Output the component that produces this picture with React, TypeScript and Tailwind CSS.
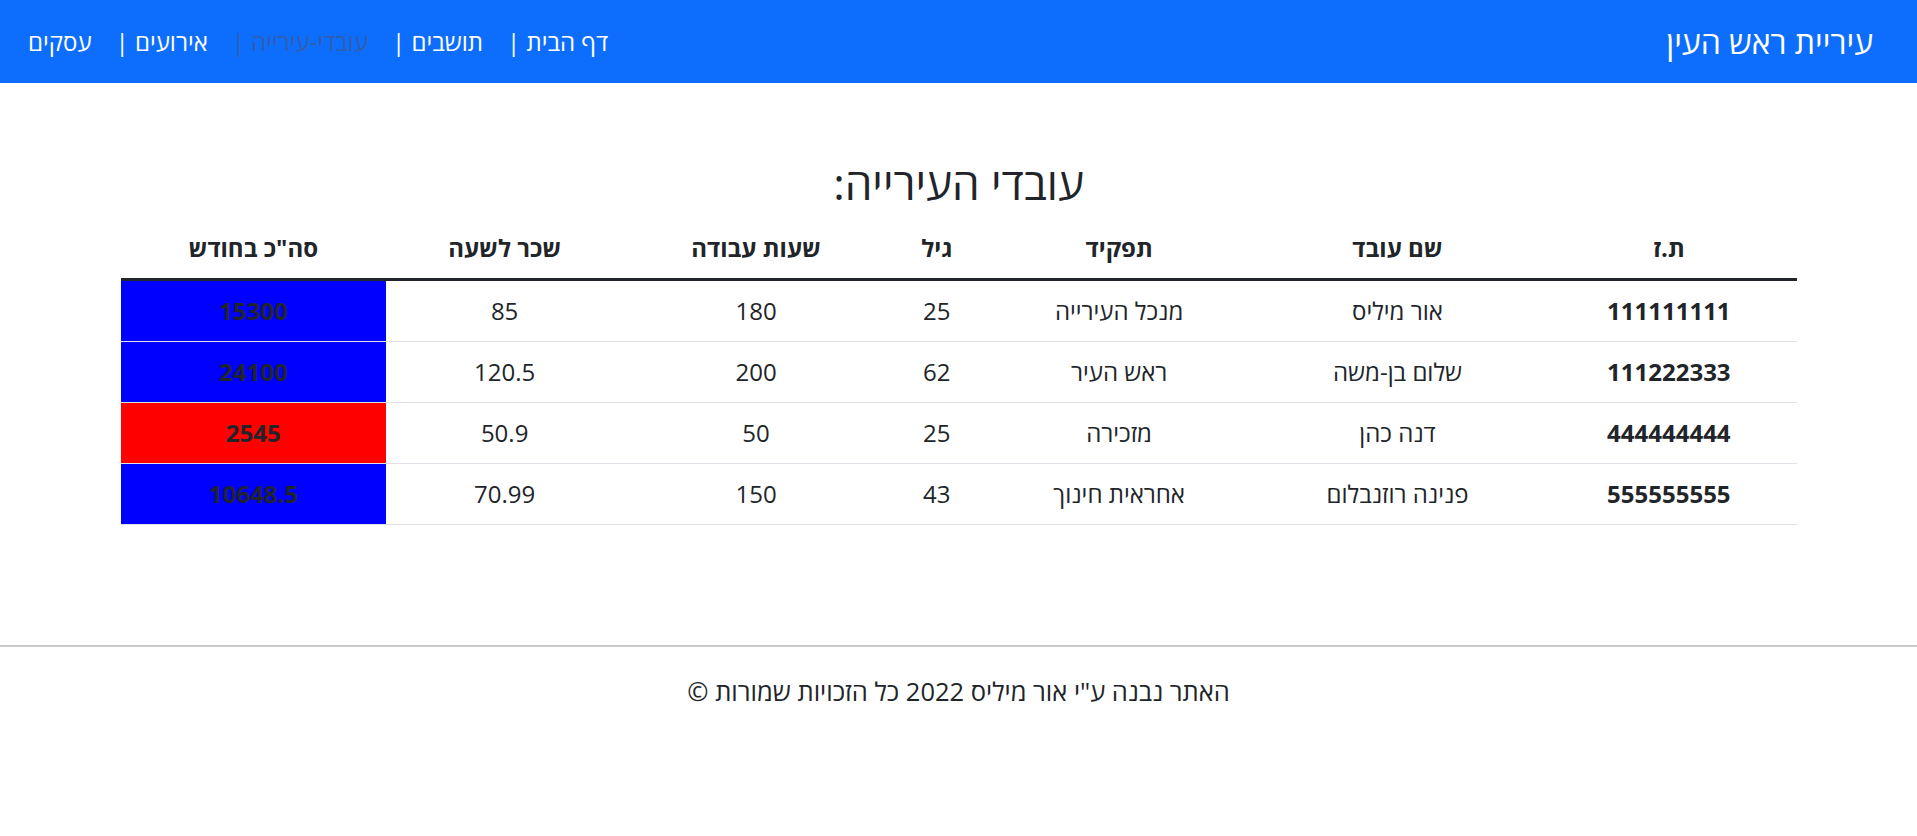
const links = [
  { label: 'דף הבית |', dim: false },
  { label: 'תושבים |', dim: false },
  { label: 'עובדי-עירייה |', dim: true },
  { label: 'אירועים |', dim: false },
  { label: 'עסקים', dim: false },
];

const workers = [
  { id: '111111111', name: 'אור מיליס', role: 'מנכל העירייה', age: 25, hours: 180, wage: 85, total: 15300 },
  { id: '111222333', name: 'שלום בן-משה', role: 'ראש העיר', age: 62, hours: 200, wage: 120.5, total: 24100 },
  { id: '444444444', name: 'דנה כהן', role: 'מזכירה', age: 25, hours: 50, wage: 50.9, total: 2545 },
  { id: '555555555', name: 'פנינה רוזנבלום', role: 'אחראית חינוך', age: 43, hours: 150, wage: 70.99, total: 10648.5 },
];

const headers = ['ת.ז', 'שם עובד', 'תפקיד', 'גיל', 'שעות עבודה', 'שכר לשעה', 'סה"כ בחודש'];

export default function App() {
  return (
    <div dir="rtl" className="min-h-[836px] bg-white text-[#212529] font-['Open_Sans','DejaVu_Sans',sans-serif]">
      {/* Navbar */}
      <nav className="flex items-center justify-between h-[83px] bg-[#0d6efd] pr-[44px] pl-[16px]">
        <a className="text-[32px] leading-[45px] text-white">עיריית ראש העין</a>
        <ul className="flex items-center">
          {links.map((l) => (
            <li key={l.label}>
              <a className={`block px-[12px] text-[24px] leading-[36px] ${l.dim ? 'text-[#2f5fae]' : 'text-white'}`}>
                {l.label}
              </a>
            </li>
          ))}
        </ul>
      </nav>

      {/* Employees */}
      <main className="pt-[74px] pb-[120px]">
        <h3 className="text-center text-[44px] leading-[52px] font-medium mb-[9px]">עובדי העירייה:</h3>
        <table className="mx-auto w-[1676px] text-center text-[24px] leading-[36px] border-collapse">
          <thead>
            <tr>
              {headers.map((h) => (
                <th key={h} className="p-[12px] font-bold border-b-[3px] border-[#212529]">
                  {h}
                </th>
              ))}
            </tr>
          </thead>
          <tbody>
            {workers.map((w) => (
              <tr key={w.id} className="border-b border-[#dee2e6]">
                <td className="p-[12px] font-bold">{w.id}</td>
                <td className="p-[12px]">{w.name}</td>
                <td className="p-[12px]">{w.role}</td>
                <td className="p-[12px]">{w.age}</td>
                <td className="p-[12px]">{w.hours}</td>
                <td className="p-[12px]">{w.wage}</td>
                <td className={`p-[12px] font-bold ${w.total > 5000 ? 'bg-[#0000ff]' : 'bg-[#ff0000]'}`}>
                  {w.total}
                </td>
              </tr>
            ))}
          </tbody>
        </table>
      </main>

      {/* Footer */}
      <footer>
        <hr className="border-t-[2px] border-[#c8c9ca]" />
        <p className="text-center text-[25.5px] leading-[36px] pt-[26px]">האתר נבנה ע"י אור מיליס 2022 כל הזכויות שמורות ©</p>
      </footer>
    </div>
  );
}
